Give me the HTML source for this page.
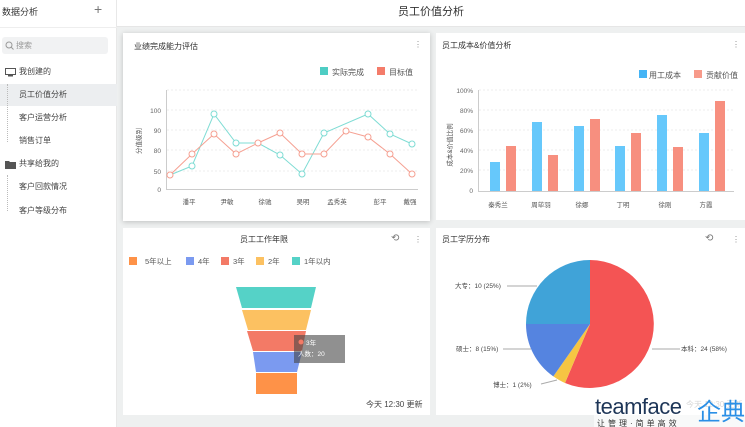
<!DOCTYPE html>
<html><head><meta charset="utf-8"><style>
*{margin:0;padding:0;box-sizing:border-box}
body{width:745px;height:427px;overflow:hidden;background:#eef0f0;font-family:"Liberation Sans","Noto Sans CJK SC",sans-serif;position:relative;color:#333}
.side{position:absolute;left:0;top:0;width:117px;height:427px;background:#fff;border-right:1px solid #e8e8e8}
.hdr{position:absolute;left:117px;top:0;width:628px;height:27px;background:#fff;border-bottom:1px solid #e6e6e6;text-align:center;font-size:11px;line-height:25px;color:#333}
.t{position:absolute;font-size:8px;color:#444;white-space:nowrap}
.card{position:absolute;background:#fff}
svg text{font-family:"Liberation Sans","Noto Sans CJK SC",sans-serif}
</style></head><body>
<div class="side">
 <div class="t" style="left:2px;top:5px;font-size:9px;color:#333">数据分析</div>
 <div class="t" style="left:94px;top:1px;font-size:14px;color:#777">+</div>
 <div style="position:absolute;left:0;top:27px;width:117px;border-top:1px solid #eee"></div>
 <div style="position:absolute;left:2px;top:37px;width:106px;height:17px;background:#f1f2f3;border-radius:3px"></div>
 <svg style="position:absolute;left:5px;top:41px" width="9" height="9"><circle cx="4" cy="4" r="3" fill="none" stroke="#999"/><path d="M6 6L8.5 8.5" stroke="#999"/></svg>
 <div class="t" style="left:16px;top:40px;color:#999">搜索</div>
 <svg style="position:absolute;left:5px;top:68px" width="11" height="9"><rect x="0.5" y="0.5" width="10" height="6" fill="none" stroke="#555"/><rect x="3" y="7" width="5" height="1.5" fill="#555"/></svg>
 <div class="t" style="left:19px;top:66px">我创建的</div>
 <div style="position:absolute;left:0;top:84px;width:117px;height:22px;background:#eceef0"></div>
 <div class="t" style="left:19px;top:89px">员工价值分析</div>
 <div class="t" style="left:19px;top:112px">客户运营分析</div>
 <div class="t" style="left:19px;top:135px">销售订单</div>
 <svg style="position:absolute;left:5px;top:160px" width="11" height="9"><path d="M0 1h4l1 1h6v7H0z" fill="#555"/></svg>
 <div class="t" style="left:19px;top:158px">共享给我的</div>
 <div class="t" style="left:19px;top:181px">客户回款情况</div>
 <div class="t" style="left:19px;top:205px">客户等级分布</div>
 <div style="position:absolute;left:7px;top:84px;height:58px;border-left:1px dotted #bbb"></div>
 <div style="position:absolute;left:7px;top:175px;height:36px;border-left:1px dotted #bbb"></div>
</div>
<div class="hdr">员工价值分析</div>

<!-- card1 -->
<div class="card" style="left:123px;top:33px;width:307px;height:188px;box-shadow:0 1px 5px rgba(0,0,0,.2)">
 <div class="t" style="left:11px;top:8px;color:#333">业绩完成能力评估</div>
 <div class="t" style="left:291px;top:7px;color:#888">⋮</div>
</div>
<svg style="position:absolute;left:123px;top:33px" width="307" height="188">
 <rect x="197" y="34" width="8" height="8" fill="#4ecdc4"/><text x="209" y="42" font-size="8" fill="#555">实际完成</text>
 <rect x="254" y="34" width="8" height="8" fill="#f47c6a"/><text x="266" y="42" font-size="8" fill="#555">目标值</text>
 <g stroke="#eee" stroke-dasharray="2,2"><line x1="44" y1="57" x2="295" y2="57"/><line x1="44" y1="77" x2="295" y2="77"/><line x1="44" y1="97" x2="295" y2="97"/><line x1="44" y1="117" x2="295" y2="117"/><line x1="44" y1="138" x2="295" y2="138"/></g>
 <path d="M43.5 57V156.5H295" stroke="#ccc" fill="none"/>
 <g font-size="6.5" fill="#666" text-anchor="end"><text x="38" y="80">100</text><text x="38" y="100">90</text><text x="38" y="120">80</text><text x="38" y="141">50</text><text x="38" y="159">0</text></g>
 <text transform="translate(18,108) rotate(-90)" font-size="6.5" fill="#555" text-anchor="middle">分值级别</text>
 <g font-size="6.5" fill="#555" text-anchor="middle"><text x="66" y="171">潘平</text><text x="104" y="171">尹敏</text><text x="142" y="171">徐驰</text><text x="180" y="171">吴明</text><text x="214" y="171">孟秀英</text><text x="257" y="171">彭平</text><text x="287" y="171">戴强</text></g>
 <g transform="translate(-120,-30)" fill="#fff" stroke-width="1">
 <polyline fill="none" stroke="#7fdcd4" points="167,172 189,163 211,111 233,140 255,140 277,152 299,171 321,130 365,111 387,131 409,141"/>
 <polyline fill="none" stroke="#f5a092" points="167,172 189,151 211,131 233,151 255,140 277,130 299,151 321,151 343,128 365,134 387,151 409,171"/>
 <g stroke="#7fdcd4"><circle cx="189" cy="163" r="3"/><circle cx="211" cy="111" r="3"/><circle cx="233" cy="140" r="3"/><circle cx="277" cy="152" r="3"/><circle cx="299" cy="171" r="3"/><circle cx="321" cy="130" r="3"/><circle cx="365" cy="111" r="3"/><circle cx="387" cy="131" r="3"/><circle cx="409" cy="141" r="3"/></g>
 <g stroke="#f5a092"><circle cx="167" cy="172" r="3"/><circle cx="189" cy="151" r="3"/><circle cx="211" cy="131" r="3"/><circle cx="233" cy="151" r="3"/><circle cx="255" cy="140" r="3"/><circle cx="277" cy="130" r="3"/><circle cx="299" cy="151" r="3"/><circle cx="321" cy="151" r="3"/><circle cx="343" cy="128" r="3"/><circle cx="365" cy="134" r="3"/><circle cx="387" cy="151" r="3"/><circle cx="409" cy="171" r="3"/></g>
 </g>
</svg>

<!-- card2 -->
<div class="card" style="left:436px;top:33px;width:309px;height:187px">
 <div class="t" style="left:6px;top:7px;color:#333">员工成本&amp;价值分析</div>
 <div class="t" style="left:296px;top:7px;color:#888">⋮</div>
</div>
<svg style="position:absolute;left:436px;top:33px" width="309" height="187">
 <rect x="203" y="37" width="8" height="8" fill="#45b4f5"/><text x="213" y="45" font-size="8" fill="#555">用工成本</text>
 <rect x="258" y="37" width="8" height="8" fill="#f79a8a"/><text x="270" y="45" font-size="8" fill="#555">贡献价值</text>
 <g stroke="#eee" stroke-dasharray="2,2"><line x1="43" y1="57" x2="297" y2="57"/><line x1="43" y1="77" x2="297" y2="77"/><line x1="43" y1="97" x2="297" y2="97"/><line x1="43" y1="117" x2="297" y2="117"/><line x1="43" y1="137" x2="297" y2="137"/></g>
 <path d="M42.5 57V158.5H298" stroke="#ccc" fill="none"/>
 <g font-size="6.5" fill="#666" text-anchor="end"><text x="37" y="60">100%</text><text x="37" y="80">80%</text><text x="37" y="100">60%</text><text x="37" y="120">40%</text><text x="37" y="140">20%</text><text x="37" y="160">0</text></g>
 <text transform="translate(16,112) rotate(-90)" font-size="6.5" fill="#555" text-anchor="middle">成本&amp;价值比例</text>
 <g font-size="6.5" fill="#555" text-anchor="middle"><text x="62" y="174">秦秀兰</text><text x="105" y="174">周荜羽</text><text x="146" y="174">徐娜</text><text x="187" y="174">丁明</text><text x="229" y="174">徐刚</text><text x="270" y="174">方霞</text></g>
 <g transform="translate(-436,-33)">
 <g fill="#66c8fb"><rect x="490" y="162" width="10" height="29"/><rect x="532" y="122" width="10" height="69"/><rect x="574" y="126" width="10" height="65"/><rect x="615" y="146" width="10" height="45"/><rect x="657" y="115" width="10" height="76"/><rect x="699" y="133" width="10" height="58"/></g>
 <g fill="#f78f7f"><rect x="506" y="146" width="10" height="45"/><rect x="548" y="155" width="10" height="36"/><rect x="590" y="119" width="10" height="72"/><rect x="631" y="133" width="10" height="58"/><rect x="673" y="147" width="10" height="44"/><rect x="715" y="101" width="10" height="90"/></g>
 </g>
</svg>

<!-- card3 -->
<div class="card" style="left:123px;top:228px;width:307px;height:187px">
 <div class="t" style="left:117px;top:6px;color:#333">员工工作年限</div>
 <div class="t" style="left:268px;top:5px;color:#777;font-size:10px">⟲</div>
 <div class="t" style="left:291px;top:7px;color:#888">⋮</div>
 <div class="t" style="left:243px;top:171px;color:#444">今天 12:30 更新</div>
</div>
<svg style="position:absolute;left:123px;top:228px" width="307" height="187">
 <g font-size="7.5" fill="#555">
 <rect x="6" y="29" width="8" height="8" fill="#fe9248"/><text x="22" y="36">5年以上</text>
 <rect x="63" y="29" width="8" height="8" fill="#7b9af0"/><text x="75" y="36">4年</text>
 <rect x="98" y="29" width="8" height="8" fill="#f37a66"/><text x="110" y="36">3年</text>
 <rect x="133" y="29" width="8" height="8" fill="#fcc161"/><text x="145" y="36">2年</text>
 <rect x="169" y="29" width="8" height="8" fill="#55d2c7"/><text x="181" y="36">1年以内</text>
 </g>
 <g transform="translate(-123,-228)">
 <polygon points="236,287 316,287 311,308 242,308" fill="#55d2c7"/>
 <polygon points="242,310 311,310 306,330 248,330" fill="#fcc161"/>
 <polygon points="247,331 306,331 302,351 253,351" fill="#f37a66"/>
 <polygon points="253,352 302,352 297,372 256,372" fill="#7b9af0"/>
 <rect x="256" y="373" width="41" height="21" fill="#fe9248"/>
 <rect x="294" y="335" width="51" height="28" fill="rgba(70,70,70,.6)"/>
 <circle cx="301" cy="342" r="2.5" fill="#f37a66"/>
 <text x="306" y="345" font-size="6.5" fill="#fff">3年</text>
 <text x="298" y="356" font-size="6.5" fill="#fff">人数：20</text>
 </g>
</svg>

<!-- card4 -->
<div class="card" style="left:436px;top:228px;width:309px;height:187px">
 <div class="t" style="left:6px;top:6px;color:#333">员工学历分布</div>
 <div class="t" style="left:269px;top:5px;color:#777;font-size:10px">⟲</div>
 <div class="t" style="left:296px;top:7px;color:#888">⋮</div>
 <div class="t" style="left:250px;top:171px;color:#999">今天 12:30 更新</div>
</div>
<svg style="position:absolute;left:0;top:0" width="745" height="427">
 <path d="M590 324V260A64 64 0 1 1 565 383Z" fill="#f45454"/>
 <path d="M590 324L565 383A64 64 0 0 1 553.3 376.4Z" fill="#f6c543"/>
 <path d="M590 324L553.3 376.4A64 64 0 0 1 526 324Z" fill="#5584e0"/>
 <path d="M590 324H526A64 64 0 0 1 590 260Z" fill="#40a3d8"/>
 <g stroke="#aaa" fill="none"><path d="M507 286H537"/><path d="M503 349H531"/><path d="M541 384L557 380"/><path d="M652 349H680"/></g>
 <g font-size="6.5" fill="#444"><text x="455" y="288">大专：10 (25%)</text><text x="456" y="351">硕士：8 (15%)</text><text x="493" y="387">博士：1 (2%)</text><text x="681" y="351">本科：24 (58%)</text></g>
 <rect x="594" y="394" width="151" height="33" fill="rgba(255,255,255,.6)"/>
 <text x="595" y="414" font-size="22" fill="#1d3557" letter-spacing="-0.5">teamface</text>
 <text x="697" y="420" font-size="24" fill="#2a8fe6" font-family="Noto Sans CJK SC,sans-serif">企典</text>
 <text x="597" y="426" font-size="8" fill="#333" letter-spacing="3">让管理·简单高效</text>
</svg>
</body></html>
